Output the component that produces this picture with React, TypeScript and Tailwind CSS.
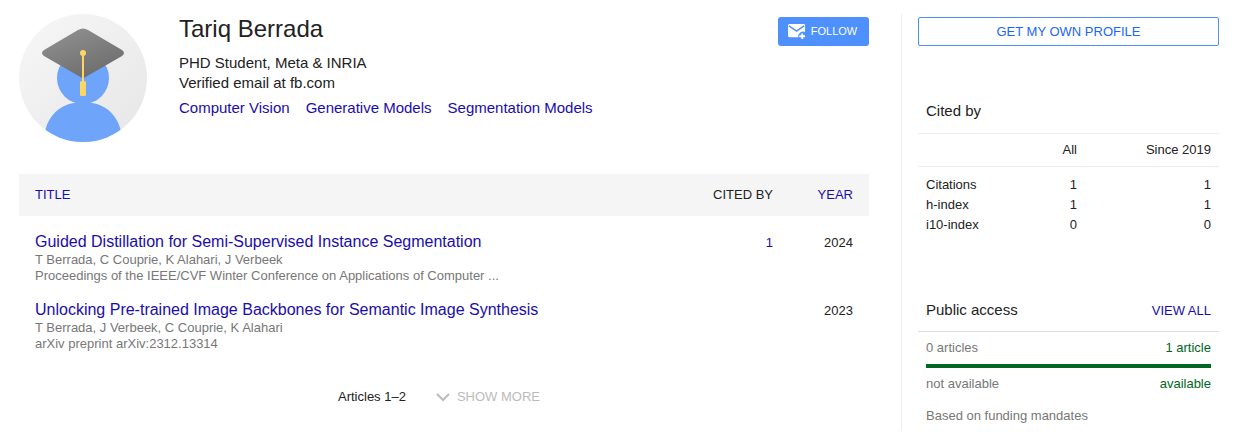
const Avatar = () => (
  <svg viewBox="0 0 128 128" className="w-32 h-32 shrink-0">
    <defs>
      <linearGradient id="bg" x1="0" y1="0" x2="1" y2="1">
        <stop offset="0" stopColor="#f7f7f7" />
        <stop offset="1" stopColor="#e6e6e6" />
      </linearGradient>
      <linearGradient id="cap" x1="0.2" y1="0" x2="0.8" y2="1">
        <stop offset="0" stopColor="#909090" />
        <stop offset="1" stopColor="#6a6a6a" />
      </linearGradient>
      <clipPath id="c"><circle cx="64" cy="64" r="64" /></clipPath>
    </defs>
    <circle cx="64" cy="64" r="64" fill="url(#bg)" />
    <g clipPath="url(#c)" fill="#6fa4fb">
      <circle cx="64" cy="64" r="26" />
      <path d="M25 128 C25 102 42 88 64 88 C86 88 103 102 103 128 Z" />
    </g>
    <path d="M59 16 Q64 13 69 16 L103 36 Q107 39 103 42 L64 64.500 L25 42 Q21 39 25 36 Z" fill="url(#cap)" />
    <circle cx="64" cy="39" r="3" fill="#fdd663" />
    <rect x="63" y="39" width="2" height="28" fill="#fdd663" />
    <rect x="61" y="67" width="6" height="15" rx="1.500" fill="#fdd663" />
  </svg>
);

const FollowIcon = () => (
  <svg viewBox="0 0 20 18" className="w-[19px] h-[17px]">
    <path d="M1.500 1 H16.500 Q18 1 18 2.500 V9.500 A5 5 0 0 0 11 15 H1.500 Q0 15 0 13.500 V2.500 Q0 1 1.500 1 Z" fill="#fff" />
    <path d="M1 3 L9 8.500 L17 3" fill="none" stroke="#4d90fe" strokeWidth="1.600" />
    <path d="M15 11 V17 M12 14 H18" stroke="#fff" strokeWidth="2" fill="none" />
  </svg>
);

const Interest = ({ children }: { children: string }) => (
  <a className="text-[#1a0dab] whitespace-nowrap">{children}</a>
);

const Article = ({ title, authors, venue, cited, year }: { title: string; authors: string; venue: string; cited?: string; year: string }) => (
  <div className="flex h-[68px] pt-[16px] pl-4 pr-4">
    <div className="flex-1 min-w-0">
      <div className="text-[16px] leading-[18px] text-[#1a0dab]">{title}</div>
      <div className="text-[13px] leading-[16px] mt-[1px] text-[#777]">{authors}</div>
      <div className="text-[13px] leading-[16px] text-[#777]">{venue}</div>
    </div>
    <div className="w-[64px] text-right text-[#1a0dab] text-[13px] leading-[18px] pt-[1px]">{cited}</div>
    <div className="w-[80px] text-right text-[#222] text-[13px] leading-[18px] pt-[1px]">{year}</div>
  </div>
);

const StatRow = ({ label, all, since }: { label: string; all: string; since: string }) => (
  <div className="flex h-[20px] items-center text-[13px] px-2 text-[#222]">
    <div className="flex-1">{label}</div>
    <div className="w-[65px] text-right">{all}</div>
    <div className="w-[134px] text-right">{since}</div>
  </div>
);

export default function App() {
  return (
    <div className="w-[1238px] h-[445px] bg-white flex pl-[19px] pt-[14px] font-['Liberation_Sans',Arial,sans-serif] overflow-hidden">
      <main className="w-[850px] shrink-0">
        <section className="flex h-[160px]">
          <Avatar />
          <div className="ml-8 flex-1">
            <h1 className="text-[24px] leading-[29px] text-[#222]">Tariq Berrada</h1>
            <div className="text-[15px] leading-[17px] text-[#222] mt-[11px]">PHD Student, Meta &amp; INRIA</div>
            <div className="text-[15px] leading-[17px] text-[#222] mt-[3px]">Verified email at fb.com</div>
            <div className="flex gap-4 text-[15px] leading-[17px] mt-[8px]">
              <Interest>Computer Vision</Interest>
              <Interest>Generative Models</Interest>
              <Interest>Segmentation Models</Interest>
            </div>
          </div>
          <button className="h-[29px] w-[91px] mt-[3px] bg-[#4d90fe] rounded-[3px] flex items-center justify-center gap-[4px] pr-[2px] text-white text-[11px]">
            <FollowIcon />
            <span>FOLLOW</span>
          </button>
        </section>
        <div className="h-[42px] bg-[#f5f5f5] flex items-center px-4 text-[13px]">
          <div className="flex-1 text-[#1a0dab]">TITLE</div>
          <div className="text-[#222] w-[90px] text-right">CITED BY</div>
          <div className="text-[#1a0dab] w-[80px] text-right">YEAR</div>
        </div>
        <div className="pt-[1px]">
          <Article
            title="Guided Distillation for Semi-Supervised Instance Segmentation"
            authors="T Berrada, C Couprie, K Alahari, J Verbeek"
            venue="Proceedings of the IEEE/CVF Winter Conference on Applications of Computer ..."
            cited="1"
            year="2024"
          />
          <Article
            title="Unlocking Pre-trained Image Backbones for Semantic Image Synthesis"
            authors="T Berrada, J Verbeek, C Couprie, K Alahari"
            venue="arXiv preprint arXiv:2312.13314"
            year="2023"
          />
        </div>
        <div className="flex justify-center items-center text-[13px] mt-[32px] h-[24px] pr-[10px]">
          <span className="text-[#222]">Articles 1–2</span>
          <svg viewBox="0 0 14 10" className="w-[14px] h-[10px] ml-[30px] mr-[7px]">
            <path d="M1 2 L7 8 L13 2" fill="none" stroke="#bbb" strokeWidth="2" />
          </svg>
          <span className="text-[#bbb]">SHOW MORE</span>
        </div>
      </main>
      <aside className="ml-[32px] w-[318px] h-[417px] border-l border-[#eee] pl-4">
        <button className="w-[301px] h-[29px] mt-[3px] border border-[#4d90fe] rounded-[2px] text-[#1a66ff] text-[13px]">GET MY OWN PROFILE</button>
        <div className="mt-[56px]">
          <div className="text-[15px] leading-[17px] text-[#222] px-2">Cited by</div>
          <div className="mt-[14px] border-t border-b border-[#eee] h-[34px] flex items-center px-2 text-[13px] text-[#222]">
            <div className="flex-1" />
            <div className="w-[65px] text-right">All</div>
            <div className="w-[134px] text-right">Since 2019</div>
          </div>
          <div className="mt-[8px]">
            <StatRow label="Citations" all="1" since="1" />
            <StatRow label="h-index" all="1" since="1" />
            <StatRow label="i10-index" all="0" since="0" />
          </div>
        </div>
        <div className="mt-[67px]">
          <div className="flex justify-between items-center px-2 h-[17px]">
            <span className="text-[15px] text-[#222]">Public access</span>
            <span className="text-[13px] text-[#1a0dab]">VIEW ALL</span>
          </div>
          <div className="mt-[12px] border-t border-[#e0e0e0] px-2 pt-[8px]">
            <div className="flex justify-between text-[13px] leading-[16px]">
              <span className="text-[#777]">0 articles</span>
              <span className="text-[#006621]">1 article</span>
            </div>
            <div className="h-1 bg-[#006621] mt-[8px]" />
            <div className="flex justify-between text-[13px] leading-[16px] mt-[8px]">
              <span className="text-[#777]">not available</span>
              <span className="text-[#006621]">available</span>
            </div>
            <div className="text-[13px] leading-[16px] text-[#777] mt-[16px]">Based on funding mandates</div>
          </div>
        </div>
      </aside>
    </div>
  );
}
